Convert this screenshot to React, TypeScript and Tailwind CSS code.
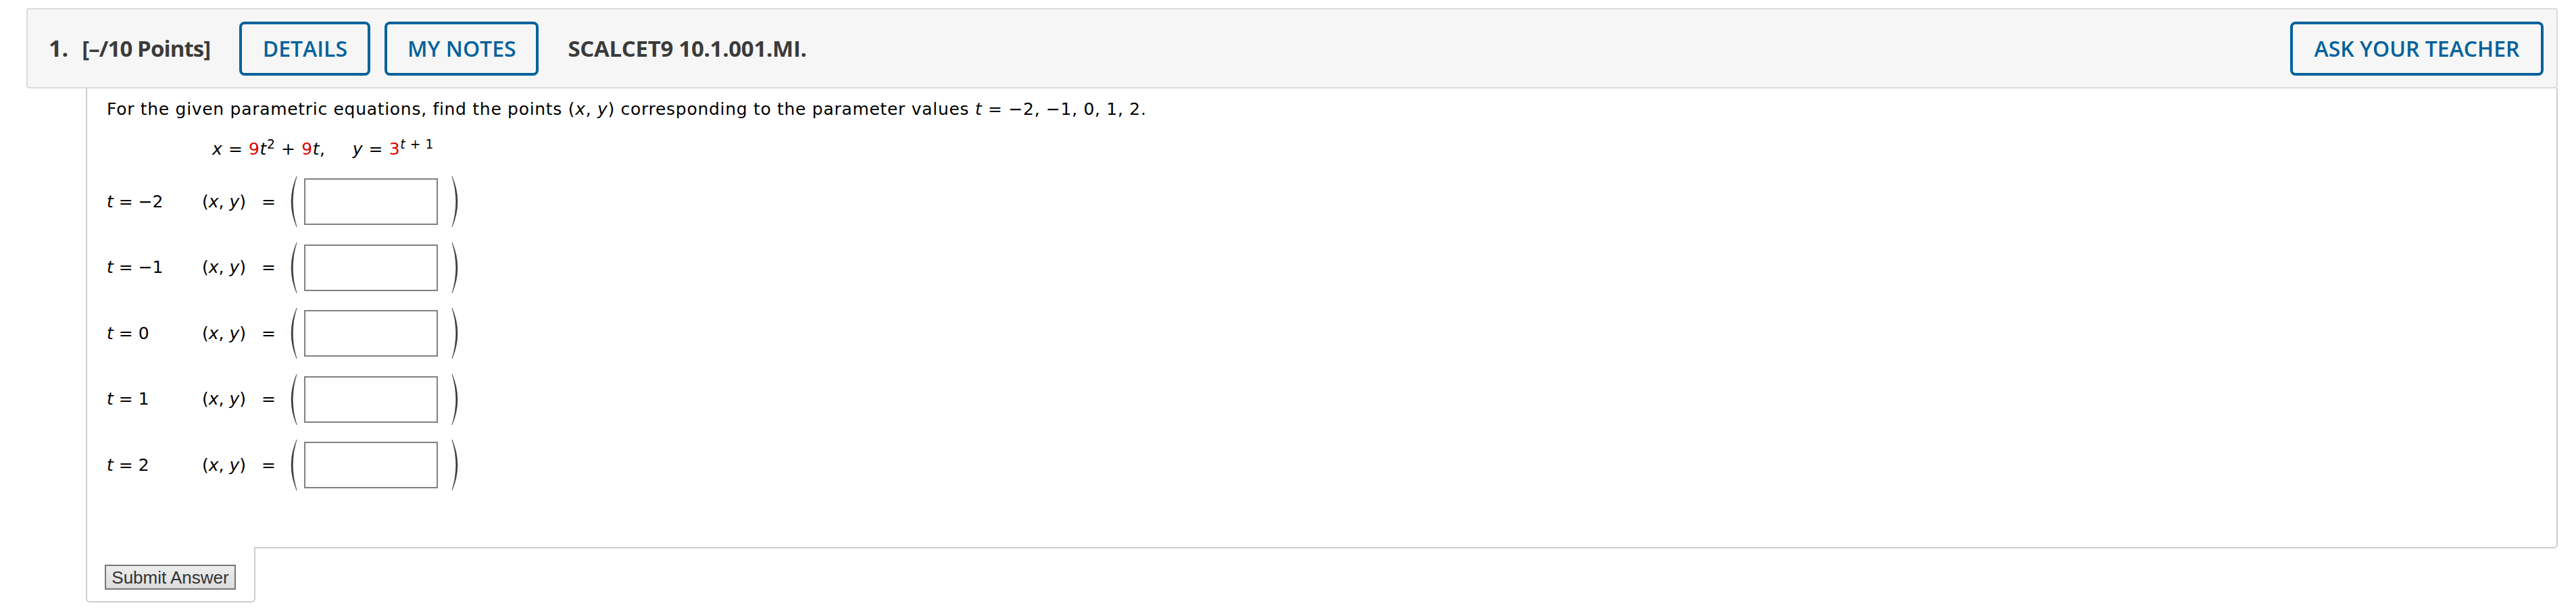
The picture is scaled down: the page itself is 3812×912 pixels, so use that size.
import React from 'react';

const rows = ['−2', '−1', '0', '1', '2'];

const Paren = ({ side }: { side: 'l' | 'r' }) => (
  <svg width="16" height="77" viewBox="0 0 16 77" className="shrink-0">
    <path
      d={side === 'l' ? 'M15 1 Q-1 38.5 15 76 Q3.5 38.5 15 1 Z' : 'M1 1 Q17 38.5 1 76 Q12.5 38.5 1 1 Z'}
      fill="#333333"
      stroke="#333333"
      strokeWidth="0.5"
    />
  </svg>
);

const HeaderButton = ({ label, width }: { label: string; width: string }) => (
  <button
    type="button"
    className={`${width} h-[80px] shrink-0 rounded-[8px] border-4 border-[#00629b] text-[32px] font-semibold text-[#00629b] flex items-center justify-center`}
  >
    {label}
  </button>
);

const Red = ({ children }: { children: React.ReactNode }) => <span className="text-[#e00000]">{children}</span>;

export default function App() {
  return (
    <div className="w-full h-[912px] bg-white overflow-hidden">
      <div
        className="ml-[39px] mr-[27px] mt-[12px] h-[119px] rounded-[4px] border-2 border-[#dcdcdc] bg-[#f6f6f6] flex items-center pl-[31px] pr-[19px] text-[#3b3b3b]"
        style={{ fontFamily: '"Open Sans", sans-serif' }}
      >
        <span className="text-[34px] font-bold">1.</span>
        <span className="ml-[20px] text-[33px] font-bold tracking-[-0.9px]">[–/10 Points]</span>
        <div className="ml-[43px] flex gap-[21px]">
          <HeaderButton label="DETAILS" width="w-[194px]" />
          <HeaderButton label="MY NOTES" width="w-[228px]" />
        </div>
        <span className="ml-[43px] text-[33px] font-bold tracking-[-0.3px]">SCALCET9 10.1.001.MI.</span>
        <div className="ml-auto">
          <HeaderButton label="ASK YOUR TEACHER" width="w-[375px]" />
        </div>
      </div>

      <div style={{ fontFamily: '"DejaVu Sans", Verdana, sans-serif' }} className="text-[25px] text-black">
        <div className="ml-[127px] mr-[27px] border-x-2 border-b-2 border-[#cccccc] rounded-br-[6px] pt-[16px] pl-[29px] pb-[83px]">
          <p className="leading-[30px] tracking-[0.7px]">
            For the given parametric equations, find the points (<i>x</i>, <i>y</i>) corresponding to the parameter values{' '}
            <i>t</i> = −2, −1, 0, 1, 2.
          </p>
          <p className="mt-[29px] ml-[156px] leading-[30px] tracking-[0.6px]">
            <i>x</i> = <Red>9</Red>
            <i>t</i>
            <sup>2</sup> + <Red>9</Red>
            <i>t</i>,<span className="inline-block w-[40px]" />
            <i>y</i> = <Red>3</Red>
            <sup>
              <i>t</i> + 1
            </sup>
          </p>
          <div className="mt-[24px] flex flex-col gap-[20.5px]">
            {rows.map((v) => (
              <div key={v} className="flex items-center h-[77px] leading-[30px]">
                <span className="w-[141px] shrink-0">
                  <i>t</i> = {v}
                </span>
                <span className="w-[88px] shrink-0">
                  (<i>x</i>, <i>y</i>)
                </span>
                <span className="w-[37px] shrink-0">=</span>
                <Paren side="l" />
                <div className="ml-[10px] w-[198px] h-[69px] border-2 border-[#808080] bg-white shrink-0" />
                <div className="ml-[20px]">
                  <Paren side="r" />
                </div>
              </div>
            ))}
          </div>
        </div>
        <div className="ml-[127px] -mt-[2px] w-[251px] h-[82px] bg-white border-x-2 border-b-2 border-[#cccccc] rounded-b-[6px] pt-[26px] pl-[26px]">
          <button
            type="button"
            className="w-[194px] h-[37px] border-2 border-[#767676] bg-gradient-to-b from-[#ededed] to-[#dcdcdc] text-[26px] leading-none text-[#333333] flex items-center justify-center"
            style={{ fontFamily: '"Liberation Sans", Arial, sans-serif' }}
          >
            Submit Answer
          </button>
        </div>
      </div>
    </div>
  );
}
